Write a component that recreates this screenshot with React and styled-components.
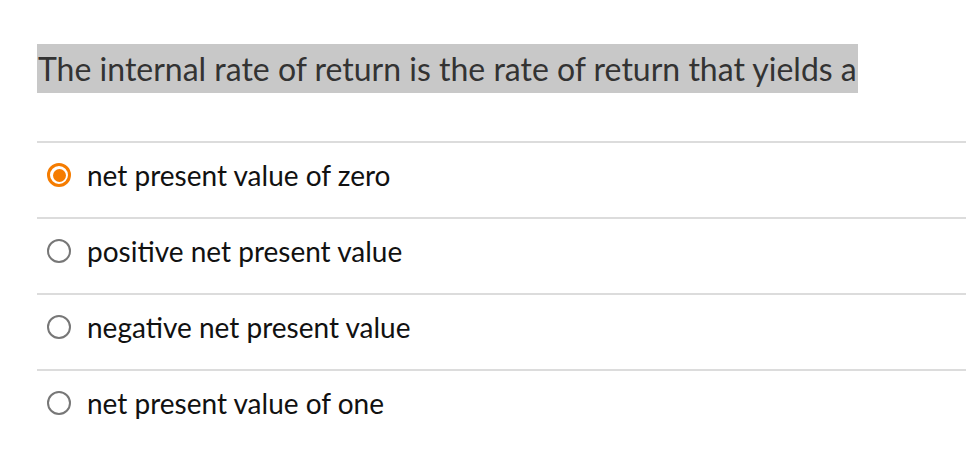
import styled, { createGlobalStyle } from "styled-components";

const GlobalStyle = createGlobalStyle`
  body {
    margin: 0;
    background: #fff;
    font-family: Lato, "Noto Sans", sans-serif;
  }
`;

const Page = styled.div`
  padding: 44px 0 0 37px;
`;

const Question = styled.div`
  display: inline-block;
  background: #c8c8c8;
  color: #333;
  font-size: 32px;
  line-height: 49px;
  padding: 0 1px;
`;

const Answers = styled.div`
  margin-top: 48px;
  display: flex;
  flex-direction: column;
`;

const Answer = styled.label`
  display: flex;
  align-items: center;
  gap: 16px;
  height: 64px;
  border-top: 2px solid #dcdcdc;
  padding-left: 10px;
  padding-bottom: 10px;
  box-sizing: content-box;
  font-size: 28px;
  color: #111;
  cursor: pointer;
`;

const Radio = styled.span`
  width: 24px;
  height: 24px;
  box-sizing: border-box;
  border-radius: 50%;
  border: ${(p) => (p.checked ? "3px solid #f57c00" : "2px solid #777")};
  display: flex;
  align-items: center;
  justify-content: center;
  flex-shrink: 0;

  &::after {
    content: "";
    display: ${(p) => (p.checked ? "block" : "none")};
    width: 13px;
    height: 13px;
    border-radius: 50%;
    background: #f57c00;
  }
`;

const answers = [
  "net present value of zero",
  "positive net present value",
  "negative net present value",
  "net present value of one",
];

export default function App() {
  return (
    <Page>
      <GlobalStyle />
      <Question>The internal rate of return is the rate of return that yields a</Question>
      <Answers>
        {answers.map((a, i) => (
          <Answer key={a}>
            <Radio checked={i === 0} />
            {a}
          </Answer>
        ))}
      </Answers>
    </Page>
  );
}
